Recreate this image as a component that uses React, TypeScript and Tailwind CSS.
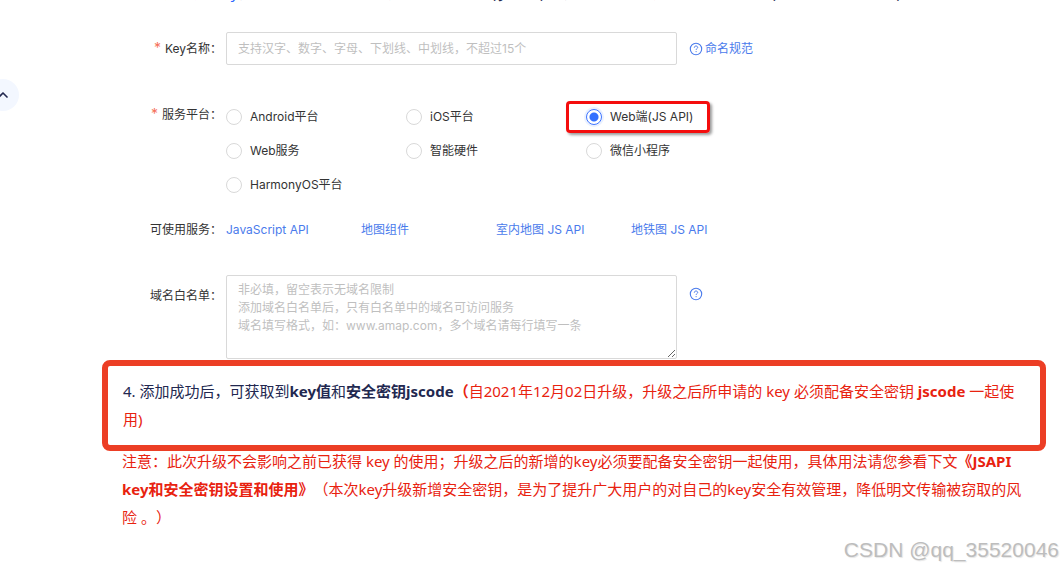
import { useState } from 'react';
import { ChevronUp } from 'lucide-react';
import { clsx } from 'clsx';

const platforms = [
  'Android平台', 'iOS平台', 'Web端(JS API)',
  'Web服务', '智能硬件', '微信小程序',
  'HarmonyOS平台',
];

const services = ['JavaScript API', '地图组件', '室内地图 JS API', '地铁图 JS API'];

const domainHint = [
  '非必填，留空表示无域名限制',
  '添加域名白名单后，只有白名单中的域名可访问服务',
  '域名填写格式，如：www.amap.com，多个域名请每行填写一条',
].join('\n');

function HelpIcon() {
  return (
    <svg viewBox="0 0 14 14" className="size-[14px] shrink-0" fill="none" stroke="currentColor" aria-hidden="true">
      <circle cx="7" cy="7" r="5.7" strokeWidth="1.1" />
      <path d="M5.3 5.7c0-1 .7-1.7 1.7-1.7s1.7.7 1.7 1.5c0 1.1-1.6 1.2-1.6 2.4" strokeWidth="1" />
      <circle cx="7.1" cy="9.6" r=".6" fill="currentColor" stroke="none" />
    </svg>
  );
}

function Required() {
  return <span className="mr-1 text-sm leading-none text-[#f5705a]">*</span>;
}

export default function App() {
  const [platform, setPlatform] = useState('Web端(JS API)');

  return (
    <div className="relative min-h-screen overflow-hidden bg-white font-['Noto_Sans','Noto_Sans_CJK_SC',sans-serif] text-[15px] leading-7 text-[#222850] [text-spacing-trim:space-all]">
      <button
        type="button"
        aria-label="收起"
        className="absolute top-[79px] -left-[13px] flex size-8 items-center justify-center rounded-full bg-[#f3f7ff]"
      >
        <ChevronUp size={16} strokeWidth={2.5} />
      </button>

      <main className="-mt-[22px] pr-[17px] pl-[102px]">
        <p className="h-7 pl-4 whitespace-nowrap">
          2. 为应用<a href="#key" className="text-[#2a66ff]">添加 Key</a>，「服务平台」一项请选择「 Web 端 ( JSAPI ) 」，此处请勿误选为「 Web 服务 ( Web Service API ) 」
        </p>

        <form className="mt-[26px] font-['Inter','Noto_Sans_CJK_SC',sans-serif] text-xs text-[#333]">
          <div className="flex items-center">
            <label htmlFor="key-name" className="w-[124px] pr-1 text-right whitespace-nowrap">
              <Required />Key名称：
            </label>
            <input
              id="key-name"
              type="text"
              placeholder="支持汉字、数字、字母、下划线、中划线，不超过15个"
              className="h-[33px] w-[451px] rounded-xs border border-[#d9d9d9] px-[11px] outline-none placeholder:text-[#bfbfbf]"
            />
            <a href="#naming" className="ml-3 flex items-center gap-0.5 text-[#4a7bec]">
              <HelpIcon />
              命名规范
            </a>
          </div>

          <fieldset className="mt-9 flex">
            <legend className="float-left w-[124px] pt-1.5 pr-1 text-right whitespace-nowrap">
              <Required />服务平台：
            </legend>
            <div className="grid grid-cols-[180px_180px_180px] gap-y-0.5">
              {platforms.map((name) => (
                <label
                  key={name}
                  className={clsx(
                    'flex h-8 items-center gap-2 whitespace-nowrap',
                    name === 'Web端(JS API)' &&
                      '-ml-5 w-36 rounded-sm border-3 border-[#f40d0d] pl-[17px] shadow-[2px_2px_3px_rgba(0,0,0,0.4)]',
                  )}
                >
                  <input
                    type="radio"
                    name="platform"
                    checked={platform === name}
                    onChange={() => setPlatform(name)}
                    className="size-4 appearance-none rounded-full border border-[#d9d9d9] bg-white checked:border-[#3f75ff] checked:bg-[radial-gradient(circle,#3370ff_4px,white_5px)] checked:shadow-[0_0_0_2px_#eaf1ff]"
                  />
                  {name}
                </label>
              ))}
            </div>
          </fieldset>

          <div className="mt-[21px] flex items-center">
            <span className="w-[124px] pr-1 text-right whitespace-nowrap">可使用服务：</span>
            <div className="grid grid-cols-[135px_135px_135px_135px] whitespace-nowrap">
              {services.map((name) => (
                <a key={name} href="#service" className="text-[#4a7bec]">{name}</a>
              ))}
            </div>
          </div>

          <div className="mt-[37px] flex items-start">
            <label htmlFor="domains" className="w-[124px] pt-[13px] pr-1 text-right leading-4 whitespace-nowrap">
              域名白名单：
            </label>
            <textarea
              id="domains"
              placeholder={domainHint}
              className="h-[84px] w-[451px] resize rounded-xs border border-[#d9d9d9] px-[11px] py-[5px] leading-[18px] outline-none placeholder:text-[#bfbfbf]"
            />
            <a href="#domain-help" aria-label="域名白名单说明" className="mt-3 ml-3 text-[#4a7bec]">
              <HelpIcon />
            </a>
          </div>
        </form>

        <section className="mt-px rounded-lg border-6 border-[#ec3e25] px-[15px] pt-[11px] pb-3">
          <p>
            4. 添加成功后，可获取到<strong>key值</strong>和<strong>安全密钥jscode</strong>
            <span className="text-[#e8220f]">
              <strong>（</strong>自2021年12月02日升级，升级之后所申请的 key 必须配备安全密钥 <strong>jscode</strong> 一起使用)
            </span>
          </p>
        </section>

        <p className="-mt-1 pr-4 pl-5 text-[#e8220f]">
          注意：此次升级不会影响之前已获得 key 的使用；升级之后的新增的key必须要配备安全密钥一起使用，具体用法请您参看下文<strong>《JSAPI key和安全密钥设置和使用》</strong>（本次key升级新增安全密钥，是为了提升广大用户的对自己的key安全有效管理，降低明文传输被窃取的风险 。）
        </p>
      </main>

      <div className="absolute right-1 bottom-1 font-['Liberation_Sans',sans-serif] text-[21px] leading-7 text-[#bdbdbd] [text-shadow:1px_1px_1px_#e5e5e5]">
        CSDN @qq_35520046
      </div>
    </div>
  );
}
